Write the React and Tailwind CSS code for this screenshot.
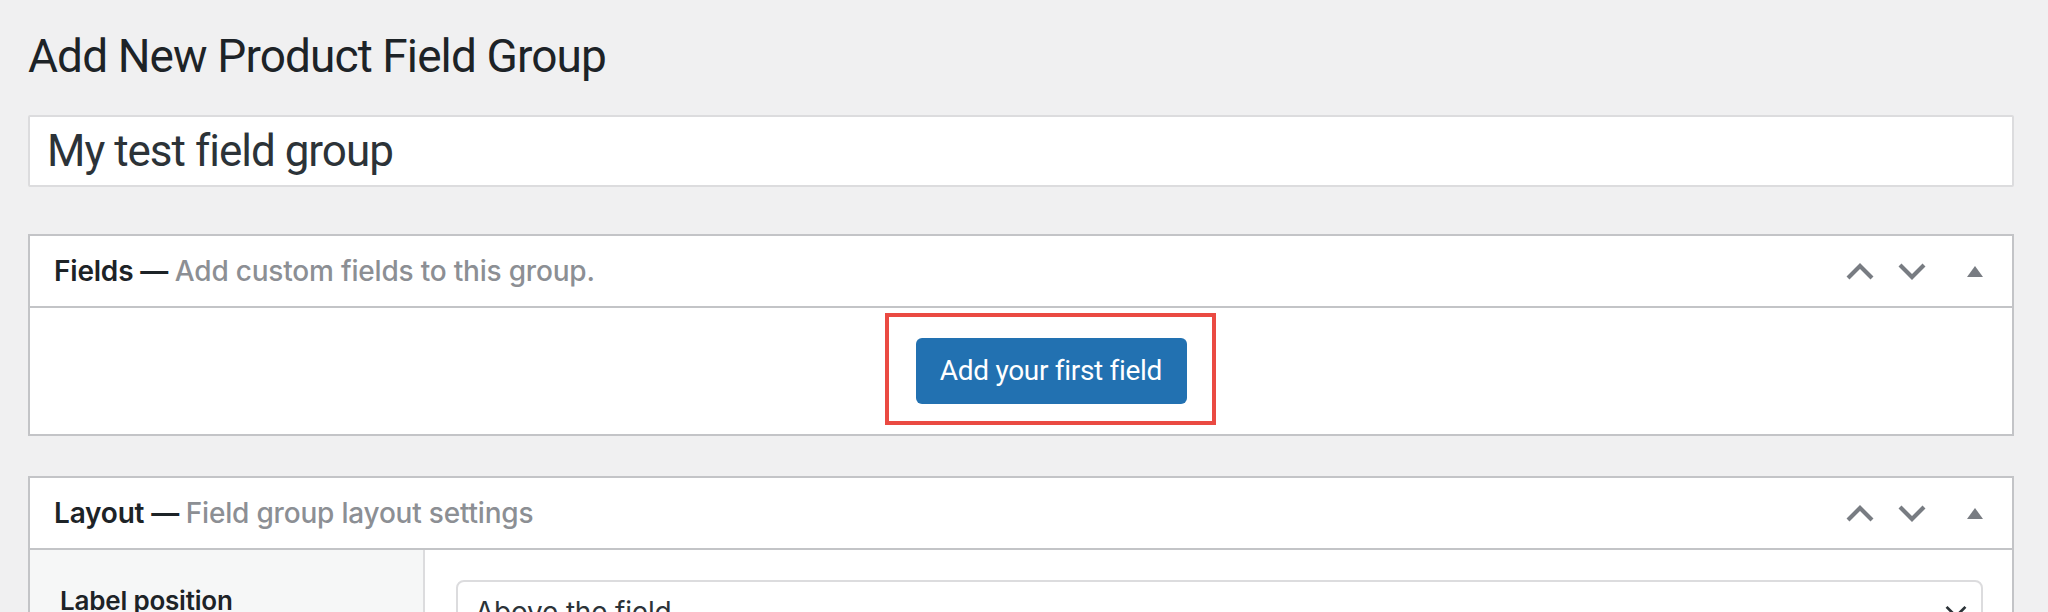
import React from "react";

function ChevronUp() {
  return (
    <svg width="28" height="17" viewBox="0 0 28 17" fill="none">
      <polyline points="2,15 14,3 26,15" stroke="#787c82" strokeWidth="4.2" strokeLinejoin="miter" />
    </svg>
  );
}

function ChevronDown({ color = "#787c82", w = 28, h = 17, sw = 4.2 }) {
  return (
    <svg width={w} height={h} viewBox="0 0 28 17" fill="none">
      <polyline points="2,2 14,14 26,2" stroke={color} strokeWidth={sw} strokeLinejoin="miter" />
    </svg>
  );
}

function Triangle() {
  return (
    <svg width="16" height="11" viewBox="0 0 16 11">
      <polygon points="8,0 16,11 0,11" fill="#787c82" />
    </svg>
  );
}

function PanelHeader({ title, desc }) {
  return (
    <div className="flex h-[72px] items-center border-b-2 border-[#c3c4c7] pl-[24px]">
      <div className="flex-1 text-[28px] leading-[28px] tracking-[-0.2px]">
        <span className="font-semibold text-[#1d2327]">{title} — </span>
        <span className="font-medium text-[#8c8f94]">{desc}</span>
      </div>
      <div className="flex h-full items-center">
        <div className="flex h-full w-[52px] items-center justify-center">
          <ChevronUp />
        </div>
        <div className="flex h-full w-[52px] items-center justify-center">
          <ChevronDown />
        </div>
        <div className="flex h-full w-[74px] items-center justify-center">
          <Triangle />
        </div>
      </div>
    </div>
  );
}

export default function App() {
  return (
    <div
      className="min-h-[612px] w-[2048px] overflow-hidden bg-[#f0f0f1] pl-[28px] pr-[34px]"
      style={{ fontFamily: "Inter, 'Liberation Sans', sans-serif", height: 612 }}
    >
      <h1
        className="pt-[26px] text-[46px] font-normal leading-[60px] tracking-[-0.9px] text-[#1d2327]"
        style={{ fontFamily: "Roboto, 'Liberation Sans', sans-serif" }}
      >
        Add New Product Field Group
      </h1>

      <div className="mt-[29px] flex h-[72px] items-center rounded-[2px] border-2 border-[#dcdcde] bg-white pl-[17px]">
        <span
          className="text-[44px] leading-[44px] tracking-[-1px] text-[#2c3338]"
          style={{ fontFamily: "Roboto, 'Liberation Sans', sans-serif" }}
        >
          My test field group
        </span>
      </div>

      <div className="mt-[47px] border-2 border-[#c3c4c7] bg-white">
        <PanelHeader title="Fields" desc="Add custom fields to this group." />
        <div className="flex justify-center py-[30px] pl-[60px]">
          <div className="relative">
            <button
              className="flex h-[66px] w-[271px] items-center justify-center rounded-[6px] bg-[#2271b1] text-[28px] tracking-[-0.3px] text-white"
              style={{ fontFamily: "Roboto, 'Liberation Sans', sans-serif" }}
            >
              Add your first field
            </button>
            <div className="pointer-events-none absolute bottom-[-21px] left-[-31px] right-[-29px] top-[-25px] border-[4px] border-[#ea4a42]" />
          </div>
        </div>
      </div>

      <div className="mt-[40px] border-2 border-[#c3c4c7] bg-white">
        <PanelHeader title="Layout" desc="Field group layout settings" />
        <div className="flex h-[120px]">
          <div className="w-[395px] border-r-2 border-[#dcdcde] bg-[#f6f7f7] pl-[30px] pt-[33px]">
            <div className="text-[26px] font-semibold leading-[36px] tracking-[-0.2px] text-[#1d2327]">Label position</div>
          </div>
          <div className="flex-1 pl-[31px] pr-[29px] pt-[30px]">
            <div className="flex h-[64px] items-center justify-between rounded-[8px] border-2 border-[#dcdcde] bg-white pl-[17px] pr-[14px]">
              <span className="text-[28px] leading-[28px] tracking-[-0.2px] text-[#2c3338]">Above the field</span>
              <ChevronDown color="#2c3338" w={22} h={14} sw={3.5} />
            </div>
          </div>
        </div>
      </div>
    </div>
  );
}
